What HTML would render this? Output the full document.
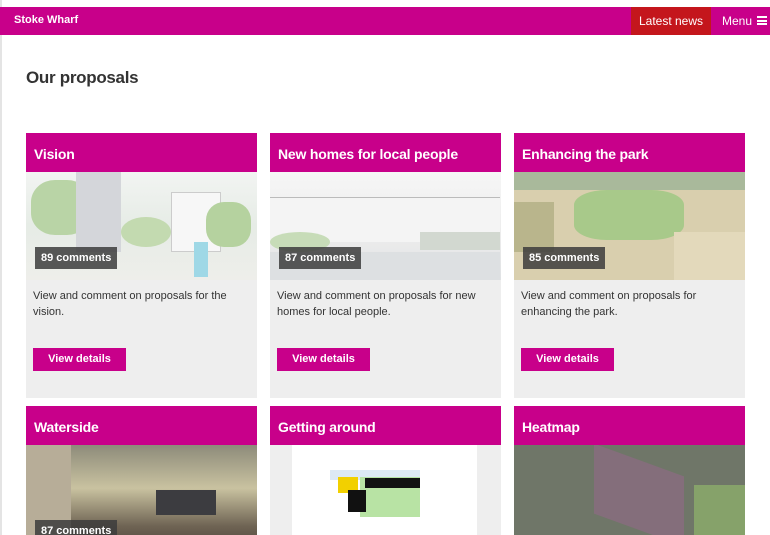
<!DOCTYPE html>
<html><head><meta charset="utf-8"><style>
*{margin:0;padding:0;box-sizing:border-box}
html,body{width:770px;height:535px;overflow:hidden}
body{background:#fff;font-family:"Liberation Sans",sans-serif;position:relative}
.lb{position:absolute;left:0;top:0;width:2px;height:535px;background:#e4e4e4}
.nav{position:absolute;left:0;top:7px;width:770px;height:28px;background:#c8008a;color:#fff;font-size:11px;font-weight:bold}
.nav .t{position:absolute;left:14px;top:7px}
.nav .ln{position:absolute;left:631px;top:0;width:80px;height:28px;background:#c4161c;text-align:center;line-height:28px;font-weight:normal;font-size:12px}
.nav .m{position:absolute;left:722px;top:7px;font-weight:normal;font-size:12px}
.nav .hb{position:absolute;left:757px;top:9px;width:10px;height:9px;border-top:2px solid #fff;border-bottom:2px solid #fff}
.nav .hb:after{content:"";position:absolute;left:0;top:1.5px;width:10px;height:2px;background:#fff}
h1{position:absolute;left:26px;top:68px;font-size:17px;color:#333;letter-spacing:-0.3px}
.card{position:absolute;width:231px;background:#eee;overflow:hidden}
.card .h{height:39px;background:#c8008a;color:#fff;font-weight:bold;font-size:14px;padding:13px 8px 0;letter-spacing:-0.2px}
.card .img{height:108px;position:relative;overflow:hidden}
.card .c{position:absolute;left:9px;top:75px;background:rgba(60,60,60,.85);color:#fff;font-size:11px;font-weight:bold;padding:5px 6px}
.card p{font-size:11px;color:#333;line-height:16px;padding:8px 7px 0;height:68px}
.card .b{margin-left:7px;width:93px;height:23px;background:#c8008a;color:#fff;font-size:11px;font-weight:bold;text-align:center;line-height:23px}
</style></head><body>
<div class="lb"></div>
<div class="nav"><span class="t">Stoke Wharf</span><span class="ln">Latest news</span><span class="m">Menu</span><span class="hb"></span></div>
<h1>Our proposals</h1>

<div class="card" style="left:26px;top:133px;height:265px">
<div class="h">Vision</div>
<div class="img" style="background:linear-gradient(180deg,#f2f4f2 0%,#e6ece6 50%,#eeeeea 100%)">
<div style="position:absolute;left:5px;top:8px;width:60px;height:55px;border-radius:40%;background:#b9d4a6"></div>
<div style="position:absolute;left:50px;top:0;width:45px;height:80px;background:#d4d6da"></div>
<div style="position:absolute;left:95px;top:45px;width:50px;height:30px;border-radius:50%;background:#c3dab0"></div>
<div style="position:absolute;left:145px;top:20px;width:50px;height:60px;background:#f7f7f7;border:1px solid #ccc"></div>
<div style="position:absolute;left:180px;top:30px;width:45px;height:45px;border-radius:40%;background:#b5d29f"></div>
<div style="position:absolute;left:168px;top:70px;width:14px;height:35px;background:#9fd8e6"></div>
<div class="c">89 comments</div></div>
<p>View and comment on proposals for the vision.</p>
<div class="b">View details</div></div>

<div class="card" style="left:270px;top:133px;height:265px">
<div class="h">New homes for local people</div>
<div class="img" style="background:linear-gradient(180deg,#f6f6f6 0%,#ececec 60%,#e0e2e4 100%)">
<div style="position:absolute;left:0;top:25px;width:230px;height:45px;background:#f4f4f4;border-top:1px solid #bbb"></div>
<div style="position:absolute;left:0;top:60px;width:60px;height:20px;border-radius:50%;background:#c7dcb8"></div>
<div style="position:absolute;left:150px;top:60px;width:80px;height:18px;background:#d2d8d0"></div>
<div style="position:absolute;left:0;top:80px;width:230px;height:28px;background:#dde0e2"></div>
<div class="c" style="left:9px">87 comments</div></div>
<p>View and comment on proposals for new homes for local people.</p>
<div class="b">View details</div></div>

<div class="card" style="left:514px;top:133px;height:265px">
<div class="h">Enhancing the park</div>
<div class="img" style="background:#d9cfae">
<div style="position:absolute;left:0;top:0;width:231px;height:18px;background:#a9b99b"></div>
<div style="position:absolute;left:60px;top:18px;width:110px;height:50px;border-radius:30%;background:#a8c98a"></div>
<div style="position:absolute;left:0;top:30px;width:40px;height:50px;background:#b9b58c"></div>
<div style="position:absolute;left:160px;top:60px;width:71px;height:48px;background:#e3d9bb"></div>
<div class="c">85 comments</div></div>
<p>View and comment on proposals for enhancing the park.</p>
<div class="b">View details</div></div>

<div class="card" style="left:26px;top:406px;height:129px">
<div class="h">Waterside</div>
<div class="img" style="background:linear-gradient(180deg,#8d8b7a 0%,#c9c2a0 40%,#6f6454 75%,#4a4038 100%)">
<div style="position:absolute;left:0;top:0;width:45px;height:90px;background:#b7ad98"></div>
<div style="position:absolute;left:130px;top:45px;width:60px;height:25px;background:#3c3c40"></div>
<div class="c" style="top:75px">87 comments</div></div></div>

<div class="card" style="left:270px;top:406px;height:129px">
<div class="h">Getting around</div>
<div class="img"><div style="position:absolute;left:22px;top:0;width:185px;height:90px;background:#fff"></div>
<div style="position:absolute;left:60px;top:25px;width:90px;height:10px;background:#dde9f4"></div>
<div style="position:absolute;left:68px;top:32px;width:20px;height:16px;background:#f2d000"></div>
<div style="position:absolute;left:90px;top:32px;width:60px;height:40px;background:#b8e3a4"></div>
<div style="position:absolute;left:95px;top:33px;width:55px;height:10px;background:#111"></div>
<div style="position:absolute;left:78px;top:45px;width:18px;height:22px;background:#111"></div></div></div>

<div class="card" style="left:514px;top:406px;height:129px">
<div class="h">Heatmap</div>
<div class="img" style="background:#6f7668">
<div style="position:absolute;left:80px;top:15px;width:90px;height:70px;background:#8a6d80;opacity:.8;transform:skewY(20deg)"></div>
<div style="position:absolute;left:180px;top:40px;width:51px;height:50px;background:#86a26a"></div></div></div>
</body></html>
